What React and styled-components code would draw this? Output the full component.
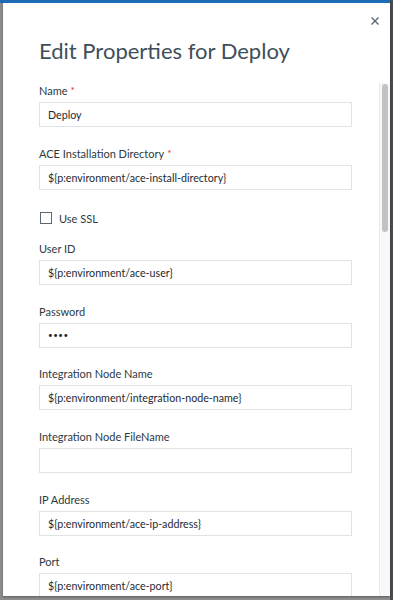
import React from "react";
import styled, { createGlobalStyle } from "styled-components";

const Global = createGlobalStyle`
  html, body { margin: 0; padding: 0; }
  body {
    font-family: Lato, "Liberation Sans", sans-serif;
    background: #8a8a8a;
    overflow: hidden;
  }
`;

const Backdrop = styled.div`
  width: 393px;
  height: 600px;
  background:
    linear-gradient(#1f6cb6, #1f6cb6) top left / 390px 3px no-repeat,
    linear-gradient(to right, #8d8d8d 0 390px, #4b4a50 390px);
  padding: 0 3px 0 3px;
  box-sizing: border-box;
`;

const Modal = styled.div`
  position: relative;
  width: 387px;
  height: 596px;
  background: #fff;
  border-top: 3px solid #1f6cb6;
  box-sizing: border-box;
  display: flex;
  flex-direction: column;
  box-shadow: 0 1px 2px rgba(0, 0, 0, 0.35);
`;

const Header = styled.div`
  padding: 33px 36px 0 36px;
  height: 80px;
  box-sizing: border-box;
  flex: none;
`;

const Title = styled.h1`
  margin: 0;
  font-family: Lato, "Liberation Sans", sans-serif;
  font-weight: 400;
  font-size: 22px;
  line-height: 30px;
  color: #3e4f5a;
`;

const Close = styled.button`
  position: absolute;
  top: 11px;
  right: 8px;
  width: 14px;
  height: 14px;
  padding: 0;
  border: 0;
  background: transparent;
  display: flex;
  align-items: center;
  justify-content: center;
  cursor: pointer;
`;

const Body = styled.div`
  flex: 1;
  min-height: 0;
  display: flex;
`;

const Scroller = styled.div`
  flex: 1;
  overflow: hidden;
`;

const Track = styled.div`
  flex: none;
  width: 11px;
  box-sizing: border-box;
  background: #f8f8f8;
  border-left: 1px solid #e9e9e9;
  padding: 1px 2px 0 2px;
`;

const Thumb = styled.div`
  width: 6px;
  height: 148px;
  border-radius: 3px;
  background: #c2c2c2;
`;

const Form = styled.form`
  padding: 0 27px 0 36px;
`;

const Field = styled.div`
  display: flex;
  flex-direction: column;
  margin-bottom: 18.6px;
`;

const Label = styled.label`
  font-size: 11px;
  line-height: 16px;
  color: #2c3a43;
  margin-bottom: 3px;
`;

const Req = styled.span`
  color: #e71d32;
  margin-left: 3px;
  font-size: 10px;
  position: relative;
  top: -1px;
`;

const Input = styled.input`
  height: 25px;
  box-sizing: border-box;
  width: 100%;
  border: 1px solid #dfe3e6;
  border-radius: 0;
  background: #fff;
  padding: 0 8px;
  font-family: Lato, "Liberation Sans", sans-serif;
  font-size: 10.7px;
  color: #1e2a32;
  outline: none;
  &[type="password"] {
    font-size: 8px;
    letter-spacing: 0.5px;
  }
`;

const CheckRow = styled.label`
  display: flex;
  align-items: center;
  height: 20px;
  margin-bottom: 13px;
  gap: 7px;
  font-size: 11px;
  color: #2c3a43;
`;

const Box = styled.span`
  width: 12px;
  height: 12px;
  box-sizing: border-box;
  border: 1px solid #5a6872;
  background: #fff;
  margin-left: 1px;
`;

const fields = [
  { label: "User ID", value: "${p:environment/ace-user}" },
  { label: "Password", value: "abcd", type: "password" },
  { label: "Integration Node Name", value: "${p:environment/integration-node-name}" },
  { label: "Integration Node FileName", value: "" },
  { label: "IP Address", value: "${p:environment/ace-ip-address}" },
  { label: "Port", value: "${p:environment/ace-port}" },
];

export default function App() {
  return (
    <>
      <Global />
      <Backdrop>
        <Modal>
          <Close aria-label="Close">
            <svg width="8" height="8" viewBox="0 0 8 8">
              <path d="M0.5 0.5 L7.5 7.5 M7.5 0.5 L0.5 7.5" stroke="#5a6872" strokeWidth="1.4" />
            </svg>
          </Close>
          <Header>
            <Title>Edit Properties for Deploy</Title>
          </Header>
          <Body>
            <Scroller>
              <Form onSubmit={(e) => e.preventDefault()}>
                <Field>
                  <Label>
                    Name<Req>*</Req>
                  </Label>
                  <Input defaultValue="Deploy" />
                </Field>
                <Field>
                  <Label>
                    ACE Installation Directory<Req>*</Req>
                  </Label>
                  <Input defaultValue="${p:environment/ace-install-directory}" />
                </Field>
                <CheckRow>
                  <Box />
                  Use SSL
                </CheckRow>
                {fields.map((f) => (
                  <Field key={f.label}>
                    <Label>{f.label}</Label>
                    <Input type={f.type || "text"} defaultValue={f.value} />
                  </Field>
                ))}
              </Form>
            </Scroller>
            <Track>
              <Thumb />
            </Track>
          </Body>
        </Modal>
      </Backdrop>
    </>
  );
}
